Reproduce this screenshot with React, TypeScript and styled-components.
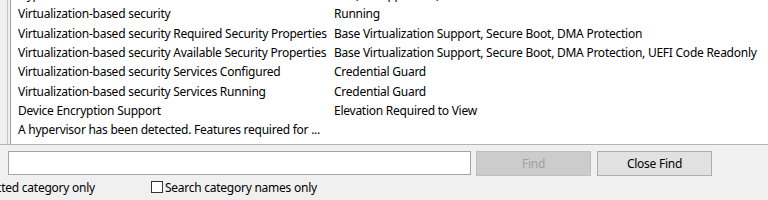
import styled, { createGlobalStyle } from "styled-components";

const GlobalStyle = createGlobalStyle`
  html, body {
    margin: 0;
    padding: 0;
    background: #f0f0f0;
  }
  body {
    font-family: "Noto Sans", "Open Sans", sans-serif;
    font-size: 12px;
    letter-spacing: -0.25px;
    color: #000;
  }
`;

interface InfoRow {
  item: string;
  value: string;
}

const rows: InfoRow[] = [
  { item: "Hyper-V - Data Execution Protection", value: "Yes (Not applicable)" },
  { item: "Virtualization-based security", value: "Running" },
  {
    item: "Virtualization-based security Required Security Properties",
    value: "Base Virtualization Support, Secure Boot, DMA Protection",
  },
  {
    item: "Virtualization-based security Available Security Properties",
    value: "Base Virtualization Support, Secure Boot, DMA Protection, UEFI Code Readonly",
  },
  { item: "Virtualization-based security Services Configured", value: "Credential Guard" },
  { item: "Virtualization-based security Services Running", value: "Credential Guard" },
  { item: "Device Encryption Support", value: "Elevation Required to View" },
  { item: "A hypervisor has been detected. Features required for ...", value: "" },
];

const Frame = styled.div`
  width: 768px;
  height: 200px;
  overflow: hidden;
  background: #f0f0f0;
`;

const Panes = styled.div`
  display: flex;
  height: 144px;
  border-bottom: 1px solid #b4b4b4;
`;

const TreeEdge = styled.div`
  width: 7px;
  flex: none;
  border-right: 1px solid #c4c4c4;
`;

const List = styled.div`
  flex: 1;
  margin-left: 2px;
  background: #fff;
  border-left: 1px solid #a0a0a0;
  overflow: hidden;
`;

const Rows = styled.div`
  margin-top: -15px;
`;

const Row = styled.div`
  display: grid;
  grid-template-columns: 316px 1fr;
  height: 19.33px;
  align-items: center;
  padding-left: 7px;
  white-space: nowrap;
`;

const Cell = styled.span`
  overflow: hidden;
`;

const FindBar = styled.div`
  display: flex;
  align-items: center;
  padding: 5px 0 0 8px;
  height: 25px;
`;

const SearchInput = styled.input`
  box-sizing: border-box;
  width: 463px;
  height: 24px;
  margin: 0 5px 0 0;
  border: 1px solid #a5a5a5;
  background: #fff;
  outline: none;
`;

const Button = styled.button<{ $disabled?: boolean }>`
  box-sizing: border-box;
  width: 115px;
  height: 25px;
  margin: 1px 6px 0 0;
  padding: 0;
  font: inherit;
  letter-spacing: inherit;
  background: ${(p) => (p.$disabled ? "#cccccc" : "#e1e1e1")};
  border: 1px solid ${(p) => (p.$disabled ? "#bfbfbf" : "#adadad")};
  color: ${(p) => (p.$disabled ? "#a0a0a0" : "#000")};
`;

const Options = styled.div`
  display: flex;
  align-items: center;
  height: 24px;
  margin-left: -79px;
`;

const Option = styled.label`
  display: flex;
  align-items: center;
  margin-right: 56px;
  white-space: nowrap;
`;

const Check = styled.span`
  box-sizing: border-box;
  display: inline-block;
  width: 12px;
  height: 12px;
  margin-right: 2px;
  border: 1px solid #333;
  background: #fff;
`;

const App = () => {
  return (
    <Frame>
      <GlobalStyle />
      <Panes>
        <TreeEdge />
        <List>
          <Rows>
            {rows.map((row) => (
              <Row key={row.item}>
                <Cell>{row.item}</Cell>
                <Cell>{row.value}</Cell>
              </Row>
            ))}
          </Rows>
        </List>
      </Panes>
      <FindBar>
        <SearchInput />
        <Button $disabled>Find</Button>
        <Button>Close Find</Button>
      </FindBar>
      <Options>
        <Option>
          <Check />
          Search selected category only
        </Option>
        <Option>
          <Check />
          Search category names only
        </Option>
      </Options>
    </Frame>
  );
};

export default App;
